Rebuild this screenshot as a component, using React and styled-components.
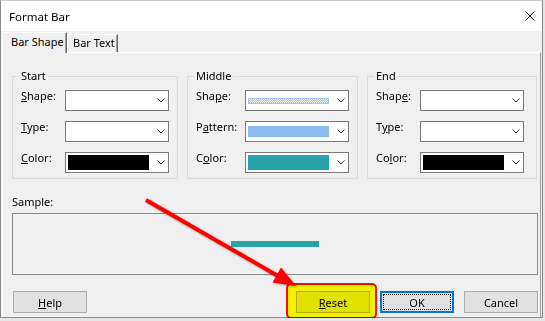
import React from "react";
import styled, { createGlobalStyle } from "styled-components";

const GlobalStyle = createGlobalStyle`
  html, body {
    margin: 0;
    padding: 0;
  }
  body {
    background: #e6e6e6;
    font-family: "Noto Sans", "Segoe UI", sans-serif;
    font-size: 11px;
    color: #000;
  }
`;

const Window = styled.div`
  position: relative;
  width: 543px;
  height: 318px;
  box-sizing: border-box;
  border: 1px solid #8a8a8a;
  border-top-color: #d0d0d0;
  background: #f0f0f0;
  display: flex;
  flex-direction: column;
`;

const TitleBar = styled.div`
  height: 30px;
  background: #fff;
  display: flex;
  align-items: center;
  justify-content: space-between;
  padding: 0 7px 0 8px;
  font-size: 11.5px;
`;

const TabStrip = styled.div`
  height: 21px;
  display: flex;
  align-items: flex-end;
  padding-left: 1px;
`;

const Tab = styled.div`
  position: relative;
  z-index: ${(p) => (p.active ? 1 : 0)};
  box-sizing: border-box;
  width: ${(p) => p.width}px;
  height: ${(p) => (p.active ? 21 : 18)}px;
  margin-bottom: ${(p) => (p.active ? -1 : 0)}px;
  padding-left: ${(p) => p.pad}px;
  background: #f0f0f0;
  border-top: 1px solid #fff;
  border-left: 1px solid #fff;
  border-right: 1px solid #696969;
  box-shadow: inset -1px 0 0 #a0a0a0;
  line-height: ${(p) => (p.active ? 18 : 16)}px;
`;

const Panel = styled.div`
  flex: 1;
  margin: 0 1px 0 1px;
  border-top: 1px solid #fff;
  border-left: 1px solid #fff;
  border-right: 1px solid #a0a0a0;
  padding: 15px 0 0 9px;
`;

const GroupRow = styled.div`
  display: flex;
  gap: 9px;
`;

const Group = styled.fieldset`
  box-sizing: border-box;
  width: ${(p) => p.width}px;
  height: 111px;
  margin: 0;
  padding: 0 0 0 8px;
  border: 1px solid #dcdcdc;
  min-width: 0;
`;

const Legend = styled.legend`
  padding: 0 2px;
  margin-left: -2px;
  line-height: 16px;
`;

const Rows = styled.div`
  margin-top: 6px;
  display: flex;
  flex-direction: column;
  gap: 10px;
`;

const Row = styled.div`
  display: flex;
  align-items: flex-start;
`;

const Label = styled.span`
  width: ${(p) => p.width}px;
  line-height: 16px;
  margin-top: -2px;
  white-space: nowrap;
`;

const Key = styled.u`
  text-underline-offset: 1px;
`;

const Combo = styled.div`
  box-sizing: border-box;
  width: 104px;
  height: 21px;
  border: 1px solid #7a7a7a;
  background: #fff;
  display: flex;
  align-items: center;
  padding-left: 2px;
`;

const Swatch = styled.div`
  width: 81px;
  height: ${(p) => p.h}px;
  background: ${(p) => p.fill};
  box-sizing: border-box;
`;

const PatternSwatch = styled.div`
  width: 81px;
  height: 6px;
  box-sizing: border-box;
  border: 1px solid #9cc6ef;
  background-color: #fff;
  background-image: repeating-conic-gradient(#8abbec 0 25%, #ffffff 0 50%);
  background-size: 2px 2px;
  image-rendering: pixelated;
`;

const Chevron = styled.svg`
  margin-left: auto;
  margin-right: 3px;
  display: block;
`;

const SampleLabel = styled.div`
  margin-top: 15px;
  line-height: 16px;
`;

const SampleBox = styled.div`
  box-sizing: border-box;
  margin-top: 3px;
  width: 526px;
  height: 62px;
  border: 1px solid #868a91;
  display: flex;
  align-items: center;
  justify-content: center;
`;

const SampleBar = styled.div`
  width: 88px;
  height: 6px;
  background: #29a3aa;
`;

const ButtonRow = styled.div`
  margin-top: 16px;
  width: 526px;
  display: flex;
  gap: 10px;
`;

const Button = styled.button`
  position: relative;
  box-sizing: border-box;
  width: 74px;
  height: 22px;
  margin: 0;
  padding: 0;
  border: 1px solid ${(p) => (p.focused ? "#0078d7" : "#adadad")};
  box-shadow: ${(p) => (p.focused ? "inset 0 0 0 1px #0078d7" : "none")};
  background: #e1e1e1;
  font-family: inherit;
  font-size: 11px;
  color: #000;
  &:first-child {
    margin-left: 1px;
    margin-right: auto;
  }
  &::after {
    content: "";
    display: ${(p) => (p.focused ? "block" : "none")};
    position: absolute;
    inset: 2px;
    border: 1px dotted #000;
  }
`;

const Highlight = styled.div`
  position: absolute;
  left: 285px;
  top: 282px;
  width: 91px;
  height: 36px;
  box-sizing: border-box;
  border: 2px solid #ff1010;
  border-radius: 5px;
  background: #ffff00;
  mix-blend-mode: multiply;
  pointer-events: none;
`;

const Overlay = styled.svg`
  position: absolute;
  left: -1px;
  top: -1px;
  pointer-events: none;
  filter: drop-shadow(1px 1px 1px rgba(0, 0, 0, 0.35));
`;

const Mn = ({ text, k }) => (
  <>
    {text.slice(0, k)}
    <Key>{text[k]}</Key>
    {text.slice(k + 1)}
  </>
);

const groups = [
  {
    title: "Start",
    width: 166,
    labelWidth: 44,
    rows: [
      { label: "Shape:", k: 0 },
      { label: "Type:", k: 0 },
      { label: "Color:", k: 0, fill: "#000", h: 15 },
    ],
  },
  {
    title: "Middle",
    width: 171,
    labelWidth: 49,
    rows: [
      { label: "Shape:", k: 3, pattern: true },
      { label: "Pattern:", k: 1, fill: "#8abbec", h: 11 },
      { label: "Color:", k: 1, fill: "#29a3aa", h: 15 },
    ],
  },
  {
    title: "End",
    width: 170,
    labelWidth: 44,
    rows: [
      { label: "Shape:", k: 4 },
      { label: "Type:", k: 1 },
      { label: "Color:", k: 2, fill: "#000", h: 15 },
    ],
  },
];

const App = () => {
  return (
    <>
      <GlobalStyle />
      <Window>
        <TitleBar>
          <span>Format Bar</span>
          <svg width="10" height="10" viewBox="0 0 10 10">
            <path d="M0.5 0.5 L9.5 9.5 M9.5 0.5 L0.5 9.5" stroke="#000" strokeWidth="1" />
          </svg>
        </TitleBar>
        <TabStrip>
          <Tab active width={65} pad={8}>Bar Shape</Tab>
          <Tab width={51} pad={5}>Bar Text</Tab>
        </TabStrip>
        <Panel>
          <GroupRow>
            {groups.map((g) => (
              <Group key={g.title} width={g.width}>
                <Legend>{g.title}</Legend>
                <Rows>
                  {g.rows.map((r) => (
                    <Row key={r.label}>
                      <Label width={g.labelWidth}>
                        <Mn text={r.label} k={r.k} />
                      </Label>
                      <Combo>
                        {r.pattern && <PatternSwatch />}
                        {r.fill && <Swatch fill={r.fill} h={r.h} />}
                        <Chevron width="8" height="5" viewBox="0 0 8 5">
                          <path d="M0.5 0.5 L4 4 L7.5 0.5" fill="none" stroke="#333" strokeWidth="1" />
                        </Chevron>
                      </Combo>
                    </Row>
                  ))}
                </Rows>
              </Group>
            ))}
          </GroupRow>
          <SampleLabel>Sample:</SampleLabel>
          <SampleBox>
            <SampleBar />
          </SampleBox>
          <ButtonRow>
            <Button>
              <Mn text="Help" k={0} />
            </Button>
            <Button>
              <Mn text="Reset" k={0} />
            </Button>
            <Button focused>OK</Button>
            <Button>Cancel</Button>
          </ButtonRow>
        </Panel>
        <Highlight />
        <Overlay width="545" height="321" viewBox="0 0 545 321">
          <line x1="146" y1="200" x2="278" y2="276" stroke="#ff0000" strokeWidth="4" />
          <polygon points="296,286 272.5,282.5 281,267.5" fill="#ff0000" />
        </Overlay>
      </Window>
    </>
  );
};

export default App;
